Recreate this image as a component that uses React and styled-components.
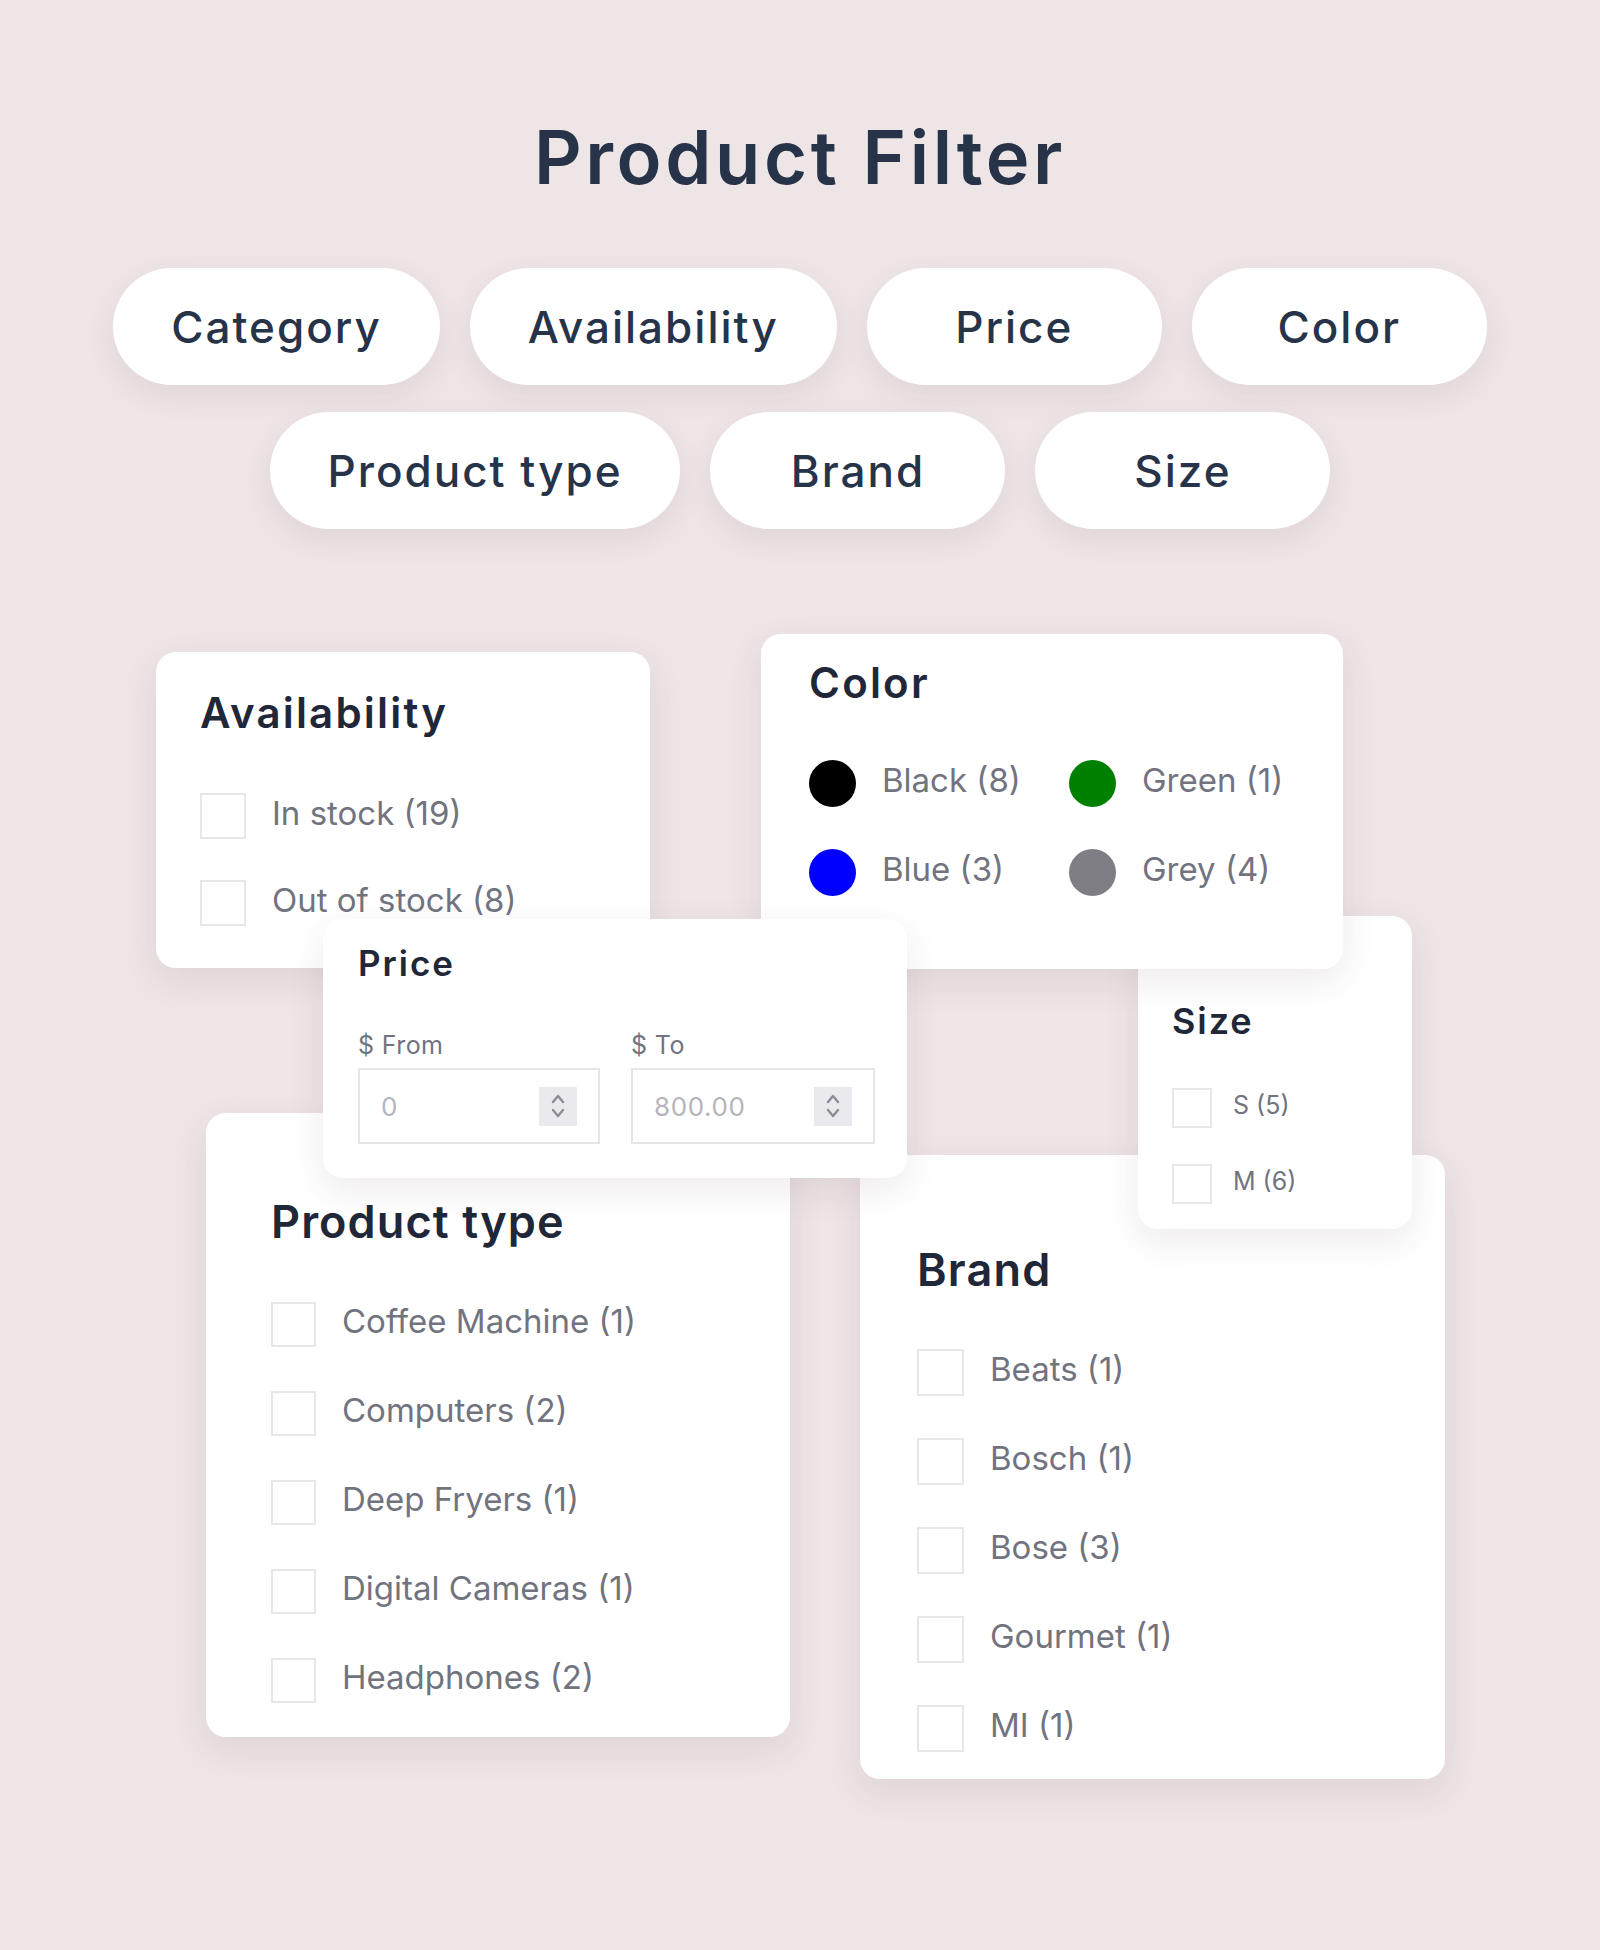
import React from "react";
import styled, { createGlobalStyle } from "styled-components";

const Global = createGlobalStyle`
  html, body { margin: 0; padding: 0; }
  body {
    background: #eee5e6;
    font-family: Inter, "Noto Sans", "Liberation Sans", sans-serif;
    -webkit-font-smoothing: antialiased;
  }
`;

const Page = styled.main`
  width: 1600px;
  min-height: 1950px;
  padding-top: 120px;
  box-sizing: border-box;
  display: flex;
  flex-direction: column;
  align-items: center;
`;

const Title = styled.h1`
  margin: 0;
  font-size: 74px;
  line-height: 1;
  font-weight: 600;
  color: #263348;
  letter-spacing: 3.6px;
`;

const PillRows = styled.div`
  margin-top: 74px;
  display: flex;
  flex-direction: column;
  align-items: center;
  gap: 27px;
`;

const PillRow = styled.div`
  display: flex;
  gap: 30px;
`;

const Pill = styled.button`
  height: 117px;
  min-width: 295px;
  padding: 0 58px;
  border: none;
  border-radius: 59px;
  background: #ffffff;
  box-shadow: 0 10px 28px rgba(110, 80, 85, 0.10);
  font-family: inherit;
  font-size: 44px;
  font-weight: 500;
  letter-spacing: 2px;
  color: #263348;
  display: flex;
  align-items: center;
  justify-content: center;
`;

const Canvas = styled.div`
  position: relative;
  margin-top: 72px;
  width: 1600px;
  height: 1350px;
`;

const Card = styled.section`
  position: absolute;
  left: ${(p) => p.$x}px;
  top: ${(p) => p.$y}px;
  width: ${(p) => p.$w}px;
  height: ${(p) => p.$h}px;
  z-index: ${(p) => p.$z};
  box-sizing: border-box;
  padding: ${(p) => p.$pt}px 0 0 ${(p) => p.$pl}px;
  background: #ffffff;
  border-radius: 20px;
  box-shadow: 0 12px 34px rgba(90, 60, 65, 0.10);
  display: flex;
  flex-direction: column;
  align-items: flex-start;
`;

const CardTitle = styled.h2`
  margin: 0;
  font-size: ${(p) => p.$size}px;
  line-height: 1;
  font-weight: 600;
  letter-spacing: ${(p) => p.$ls}px;
  color: #1f2738;
`;

const List = styled.ul`
  list-style: none;
  margin: ${(p) => p.$mt}px 0 0;
  padding: 0;
  display: flex;
  flex-direction: column;
  gap: ${(p) => p.$gap}px;
`;

const Row = styled.li`
  display: flex;
  align-items: center;
  gap: ${(p) => p.$gap}px;
  height: ${(p) => p.$box}px;
`;

const Box = styled.span`
  flex: none;
  width: ${(p) => p.$box}px;
  height: ${(p) => p.$box}px;
  box-sizing: border-box;
  border: 2px solid #e7e7e9;
  background: #fff;
`;

const Label = styled.span`
  font-size: ${(p) => p.$size}px;
  line-height: 1;
  color: #71747f;
  font-weight: 400;
  margin-top: -6px;
`;

const SwatchGrid = styled.div`
  margin-top: ${(p) => p.$mt}px;
  display: grid;
  grid-template-columns: 260px auto;
  row-gap: 42px;
`;

const SwatchItem = styled.div`
  display: flex;
  align-items: center;
  gap: 26px;
  height: 47px;
`;

const Swatch = styled.span`
  width: 47px;
  height: 47px;
  border-radius: 50%;
  background: ${(p) => p.$c};
  flex: none;
`;

const PriceFields = styled.div`
  margin-top: 52px;
  display: flex;
  gap: 31px;
`;

const Field = styled.div`
  display: flex;
  flex-direction: column;
  gap: 10px;
`;

const FieldLabel = styled.span`
  font-size: 25px;
  line-height: 1;
  letter-spacing: 0.4px;
  color: #71747f;
`;

const Input = styled.div`
  width: ${(p) => p.$w}px;
  height: 76px;
  box-sizing: border-box;
  border: 2px solid #e6e6e8;
  display: flex;
  align-items: center;
  justify-content: space-between;
  padding: 0 21px;
`;

const InputValue = styled.span`
  font-size: 26px;
  letter-spacing: 0.6px;
  color: #b4b5bc;
`;

const Spinner = styled.span`
  width: 38px;
  height: 39px;
  background: #e9e9ee;
  display: flex;
  align-items: center;
  justify-content: center;
`;

const SpinIcon = () => (
  <svg width="16" height="28" viewBox="0 0 16 28" fill="none" stroke="#8b8c95" strokeWidth="2.4" strokeLinecap="round" strokeLinejoin="round">
    <path d="M3 10 L8 4 L13 10" />
    <path d="M3 18 L8 24 L13 18" />
  </svg>
);

const CheckList = ({ items, mt, gap, box, labelSize, labelGap }) => (
  <List $mt={mt} $gap={gap}>
    {items.map((t) => (
      <Row key={t} $box={box} $gap={labelGap}>
        <Box $box={box} />
        <Label $size={labelSize}>{t}</Label>
      </Row>
    ))}
  </List>
);

export default function App() {
  return (
    <>
      <Global />
      <Page>
        <Title>Product Filter</Title>
        <PillRows>
          <PillRow>
            <Pill>Category</Pill>
            <Pill>Availability</Pill>
            <Pill>Price</Pill>
            <Pill>Color</Pill>
          </PillRow>
          <PillRow>
            <Pill>Product type</Pill>
            <Pill>Brand</Pill>
            <Pill>Size</Pill>
          </PillRow>
        </PillRows>

        <Canvas>
          <Card $x={156} $y={51} $w={494} $h={316} $z={1} $pt={40} $pl={44}>
            <CardTitle $size={42} $ls={2.2}>Availability</CardTitle>
            <CheckList items={["In stock (19)", "Out of stock (8)"]} mt={59} gap={41} box={46} labelSize={33} labelGap={26} />
          </Card>

          <Card $x={761} $y={33} $w={582} $h={335} $z={3} $pt={28} $pl={48}>
            <CardTitle $size={42} $ls={2.2}>Color</CardTitle>
            <SwatchGrid $mt={56}>
              <SwatchItem><Swatch $c="#000000" /><Label $size={33}>Black (8)</Label></SwatchItem>
              <SwatchItem><Swatch $c="#008000" /><Label $size={33}>Green (1)</Label></SwatchItem>
              <SwatchItem><Swatch $c="#0000ff" /><Label $size={33}>Blue (3)</Label></SwatchItem>
              <SwatchItem><Swatch $c="#7e7e84" /><Label $size={33}>Grey (4)</Label></SwatchItem>
            </SwatchGrid>
          </Card>

          <Card $x={323} $y={318} $w={584} $h={259} $z={4} $pt={27} $pl={35}>
            <CardTitle $size={35} $ls={2}>Price</CardTitle>
            <PriceFields>
              <Field>
                <FieldLabel>$ From</FieldLabel>
                <Input $w={242}><InputValue>0</InputValue><Spinner><SpinIcon /></Spinner></Input>
              </Field>
              <Field>
                <FieldLabel>$ To</FieldLabel>
                <Input $w={244}><InputValue>800.00</InputValue><Spinner><SpinIcon /></Spinner></Input>
              </Field>
            </PriceFields>
          </Card>

          <Card $x={1138} $y={315} $w={274} $h={313} $z={2} $pt={87} $pl={34}>
            <CardTitle $size={36} $ls={1.9}>Size</CardTitle>
            <CheckList items={["S (5)", "M (6)"]} mt={49} gap={36} box={40} labelSize={25} labelGap={21} />
          </Card>

          <Card $x={206} $y={512} $w={584} $h={624} $z={2} $pt={86} $pl={65}>
            <CardTitle $size={45} $ls={1.1}>Product type</CardTitle>
            <CheckList
              items={["Coffee Machine (1)", "Computers (2)", "Deep Fryers (1)", "Digital Cameras (1)", "Headphones (2)"]}
              mt={58} gap={44} box={45} labelSize={33} labelGap={26}
            />
          </Card>

          <Card $x={860} $y={554} $w={585} $h={624} $z={1} $pt={92} $pl={57}>
            <CardTitle $size={45} $ls={1.2}>Brand</CardTitle>
            <CheckList
              items={["Beats (1)", "Bosch (1)", "Bose (3)", "Gourmet (1)", "MI (1)"]}
              mt={57} gap={42} box={47} labelSize={33} labelGap={26}
            />
          </Card>
        </Canvas>
      </Page>
    </>
  );
}
